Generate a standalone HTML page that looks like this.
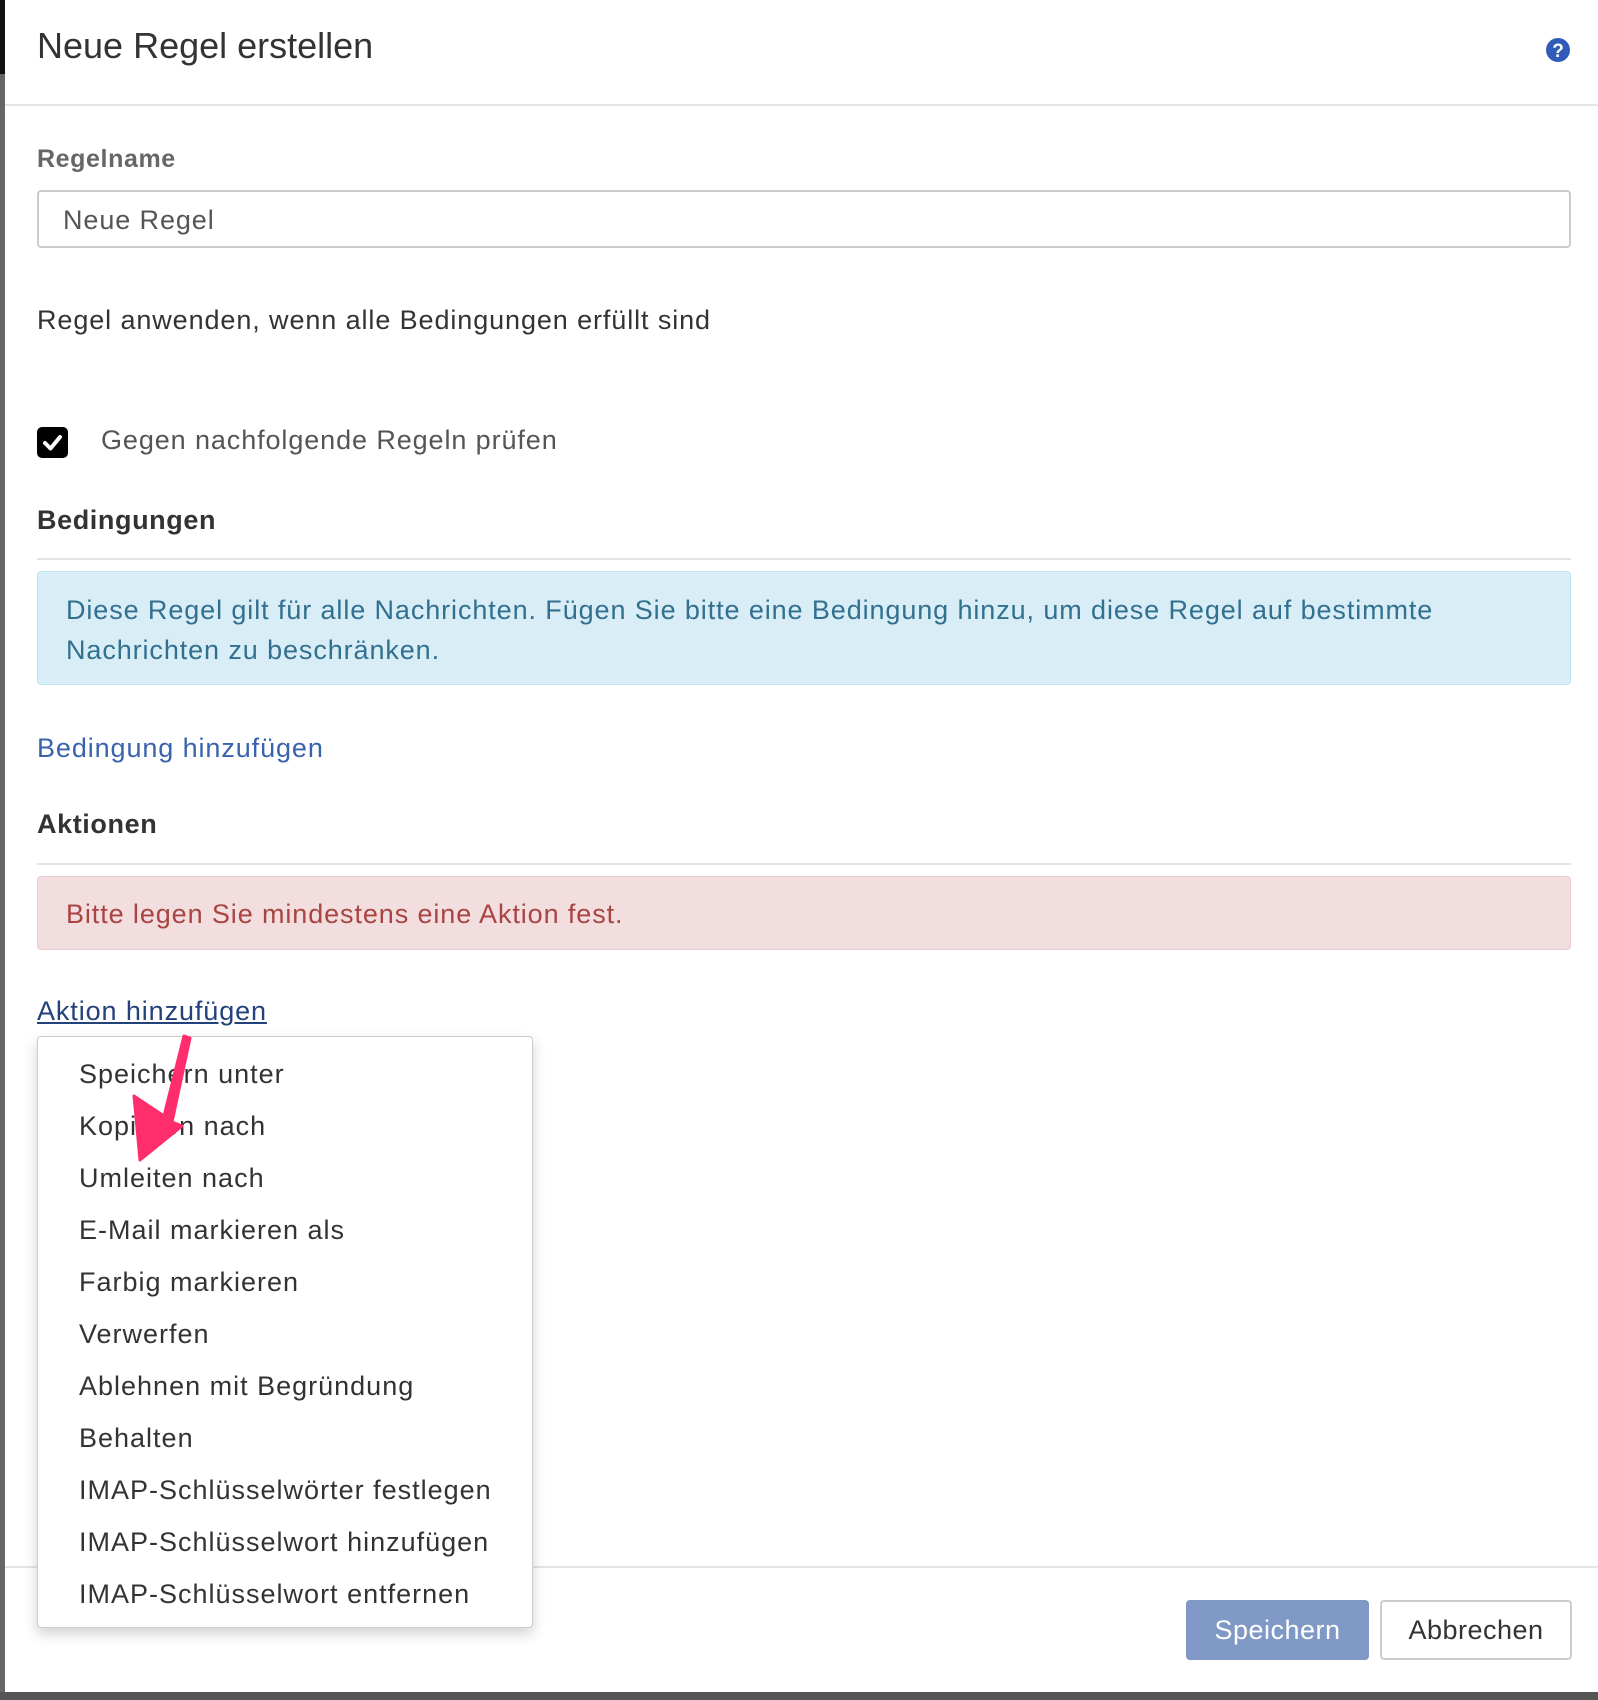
<!DOCTYPE html>
<html><head><meta charset="utf-8"><style>
*{box-sizing:border-box;margin:0;padding:0}
body{width:1598px;height:1700px;background:#fff;font-family:"Liberation Sans",sans-serif;color:#333;position:relative;overflow:hidden}
.abs{position:absolute;white-space:nowrap}
.lb{position:absolute;left:0;top:0;width:5px;height:1692px;background:#666}
.lb2{position:absolute;left:0;top:0;width:5px;height:74px;background:#111}
.bot{position:absolute;left:0;top:1692px;width:1598px;height:8px;background:#555}
.hr{position:absolute;left:5px;right:0;height:2px;background:#e5e5e5}
.hr2{position:absolute;left:37px;width:1534px;height:2px;background:#e5e5e5}
.t{font-size:27px;line-height:30px;letter-spacing:.9px}
.menu{position:absolute;left:37px;top:1036px;width:496px;height:592px;background:#fff;border:1px solid #ccc;border-radius:4px;box-shadow:0 6px 14px rgba(0,0,0,.18)}
.menu div{position:absolute;left:41px;font-size:27px;line-height:30px;letter-spacing:1px;color:#333;white-space:nowrap}
</style></head><body>
<div class="lb"></div><div class="lb2"></div>
<div class="abs" style="left:37px;top:26px;font-size:36px;line-height:40px;color:#333">Neue Regel erstellen</div>
<svg class="abs" style="left:1545px;top:37px" width="26" height="26" viewBox="0 0 26 26"><circle cx="13" cy="13" r="12" fill="#2f5cb8"/><text x="13" y="20" font-family="Liberation Sans" font-weight="bold" font-size="19" fill="#fff" text-anchor="middle">?</text></svg>
<div class="hr" style="top:104px"></div>
<div class="abs" style="left:37px;top:145px;font-size:25px;line-height:28px;font-weight:bold;color:#666;letter-spacing:.6px">Regelname</div>
<div class="abs" style="left:37px;top:190px;width:1534px;height:58px;border:2px solid #ccc;border-radius:4px"></div>
<div class="abs t" style="left:63px;top:205px;color:#555">Neue Regel</div>
<div class="abs t" style="left:37px;top:305px">Regel anwenden, wenn alle Bedingungen erfüllt sind</div>
<div class="abs" style="left:37px;top:427px;width:31px;height:31px;background:#000;border-radius:5px"></div>
<svg class="abs" style="left:37px;top:427px" width="31" height="31"><path d="M8 16 L13.5 21.5 L23 10" stroke="#fff" stroke-width="4" fill="none" stroke-linecap="round" stroke-linejoin="round"/></svg>
<div class="abs t" style="left:101px;top:425px;color:#555">Gegen nachfolgende Regeln prüfen</div>
<div class="abs t" style="left:37px;top:505px;font-weight:bold;letter-spacing:.6px">Bedingungen</div>
<div class="hr2" style="top:558px"></div>
<div class="abs" style="left:37px;top:571px;width:1534px;height:114px;background:#d9edf7;border:1px solid #bce8f1;border-radius:4px"></div>
<div class="abs t" style="left:66px;top:590px;color:#31708f;line-height:40px">Diese Regel gilt für alle Nachrichten. Fügen Sie bitte eine Bedingung hinzu, um diese Regel auf bestimmte<br>Nachrichten zu beschränken.</div>
<div class="abs t" style="left:37px;top:733px;color:#3a63ad">Bedingung hinzufügen</div>
<div class="abs t" style="left:37px;top:809px;font-weight:bold;letter-spacing:.6px">Aktionen</div>
<div class="hr2" style="top:863px"></div>
<div class="abs" style="left:37px;top:876px;width:1534px;height:74px;background:#f2dede;border:1px solid #ebccd1;border-radius:4px"></div>
<div class="abs t" style="left:66px;top:899px;color:#a94442">Bitte legen Sie mindestens eine Aktion fest.</div>
<div class="abs t" style="left:37px;top:996px;color:#23417a;text-decoration:underline">Aktion hinzufügen</div>
<div class="hr" style="top:1566px"></div>
<div class="abs" style="left:1186px;top:1600px;width:183px;height:60px;background:#7f98c6;border-radius:4px;color:#fff;font-size:27px;line-height:60px;text-align:center;letter-spacing:.5px">Speichern</div>
<div class="abs" style="left:1380px;top:1600px;width:192px;height:60px;border:2px solid #ccc;border-radius:4px;color:#333;font-size:27px;line-height:56px;text-align:center;letter-spacing:.5px">Abbrechen</div>
<div class="menu">
<div style="top:22px">Speichern unter</div>
<div style="top:74px">Kopieren nach</div>
<div style="top:126px">Umleiten nach</div>
<div style="top:178px">E-Mail markieren als</div>
<div style="top:230px">Farbig markieren</div>
<div style="top:282px">Verwerfen</div>
<div style="top:334px">Ablehnen mit Begründung</div>
<div style="top:386px">Behalten</div>
<div style="top:438px">IMAP-Schlüsselwörter festlegen</div>
<div style="top:490px">IMAP-Schlüsselwort hinzufügen</div>
<div style="top:542px">IMAP-Schlüsselwort entfernen</div>
</div>
<svg class="abs" style="left:120px;top:1030px" width="80" height="140"><path d="M64 6 L44 86 L14 66 L20 130 L62 96 L52 92 L70 8 Z" fill="#ff2d6b" stroke="#ff2d6b" stroke-width="3" stroke-linejoin="round"/></svg>
<div class="bot"></div>
</body></html>
